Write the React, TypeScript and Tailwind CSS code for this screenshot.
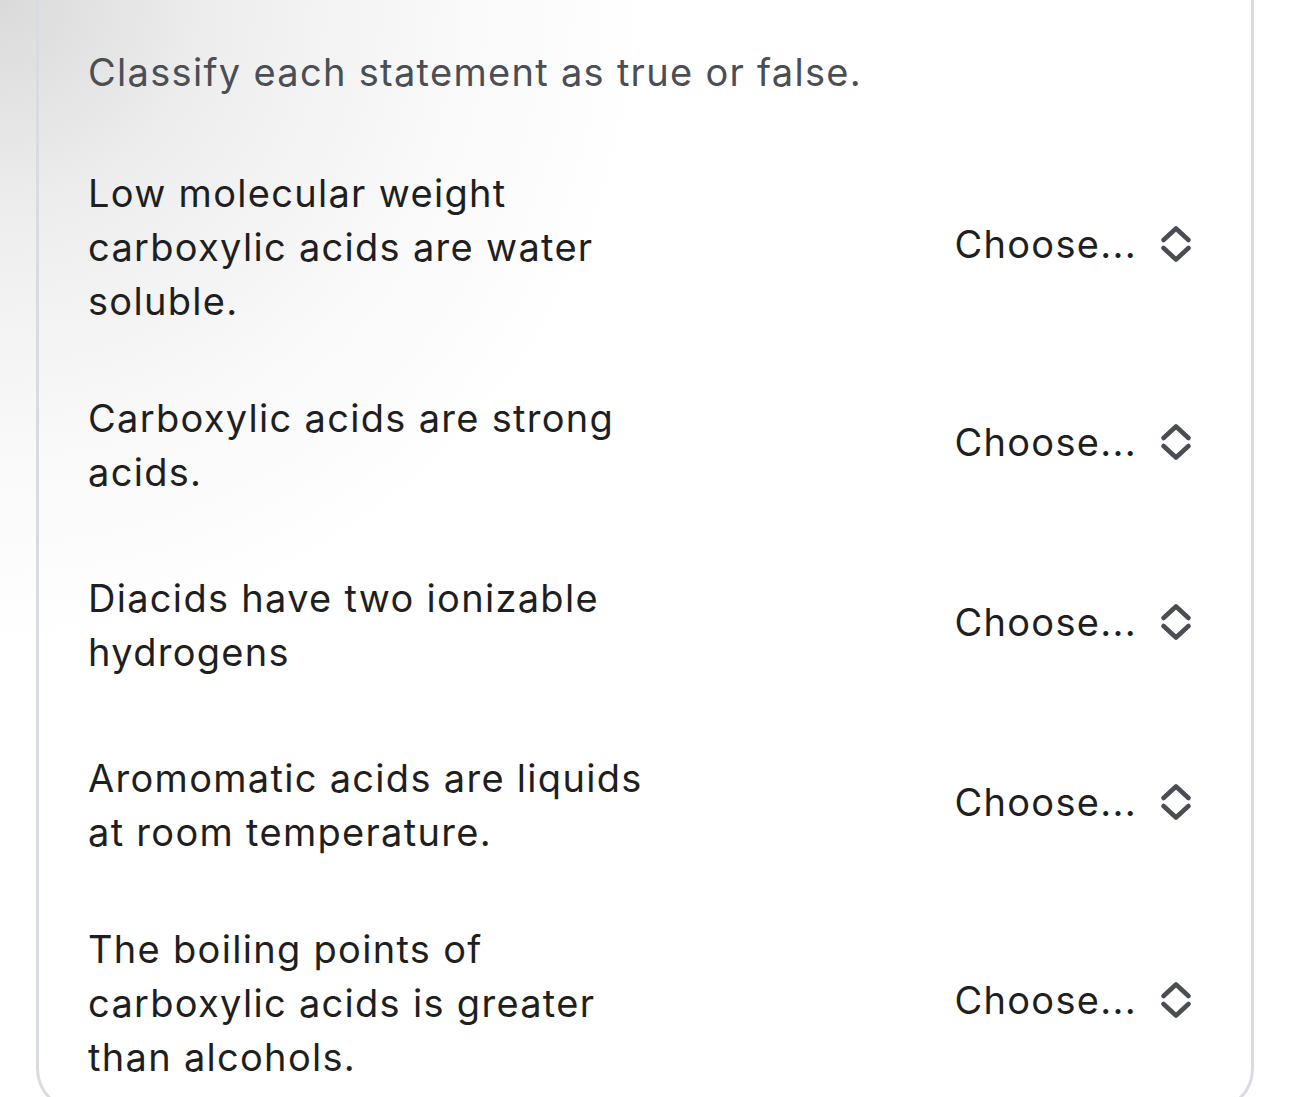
const statements: string[][] = [
  ['Low molecular weight', 'carboxylic acids are water', 'soluble.'],
  ['Carboxylic acids are strong', 'acids.'],
  ['Diacids have two ionizable', 'hydrogens'],
  ['Aromomatic acids are liquids', 'at room temperature.'],
  ['The boiling points of', 'carboxylic acids is greater', 'than alcohols.'],
];

function UpDownIcon() {
  return (
    <svg width="32" height="38" viewBox="0 0 32 38" fill="none" className="shrink-0">
      <path d="M3.5 15 L16 3.5 L28.5 15" stroke="#4a4d53" strokeWidth="4.6" strokeLinecap="round" strokeLinejoin="round" />
      <path d="M3.5 23 L16 34.5 L28.5 23" stroke="#4a4d53" strokeWidth="4.6" strokeLinecap="round" strokeLinejoin="round" />
    </svg>
  );
}

export default function App() {
  return (
    <div className="min-h-[1097px] overflow-hidden bg-[radial-gradient(circle_at_0_0,#dadada_0px,#eeeeee_220px,#f9f9f9_450px,#ffffff_650px)] px-[36px] font-['Inter',sans-serif] tracking-[1.3px]">
      <div className="-mt-10 rounded-b-[42px] border-[3px] border-t-0 border-[#d8dbe0] pb-[24px] pl-[49px] pr-[59px] pt-[85px]">
        <p className="text-[38px] leading-[54px] text-[#4a4e55]">Classify each statement as true or false.</p>

        <div className="mt-[67px] flex flex-col gap-[54px]">
          {statements.map((lines, i) => (
            <div key={i} className="flex min-h-[126px] items-center justify-between">
              <p className="text-[38px] leading-[54px] text-[#1f1f21]">
                {lines.map((line, j) => (
                  <span key={j} className="block whitespace-nowrap">
                    {line}
                  </span>
                ))}
              </p>
              <button className="-mt-1.5 flex items-center gap-[23px] text-[38px] leading-[54px] text-[#1f1f21]">
                Choose...
                <UpDownIcon />
              </button>
            </div>
          ))}
        </div>
      </div>
    </div>
  );
}
